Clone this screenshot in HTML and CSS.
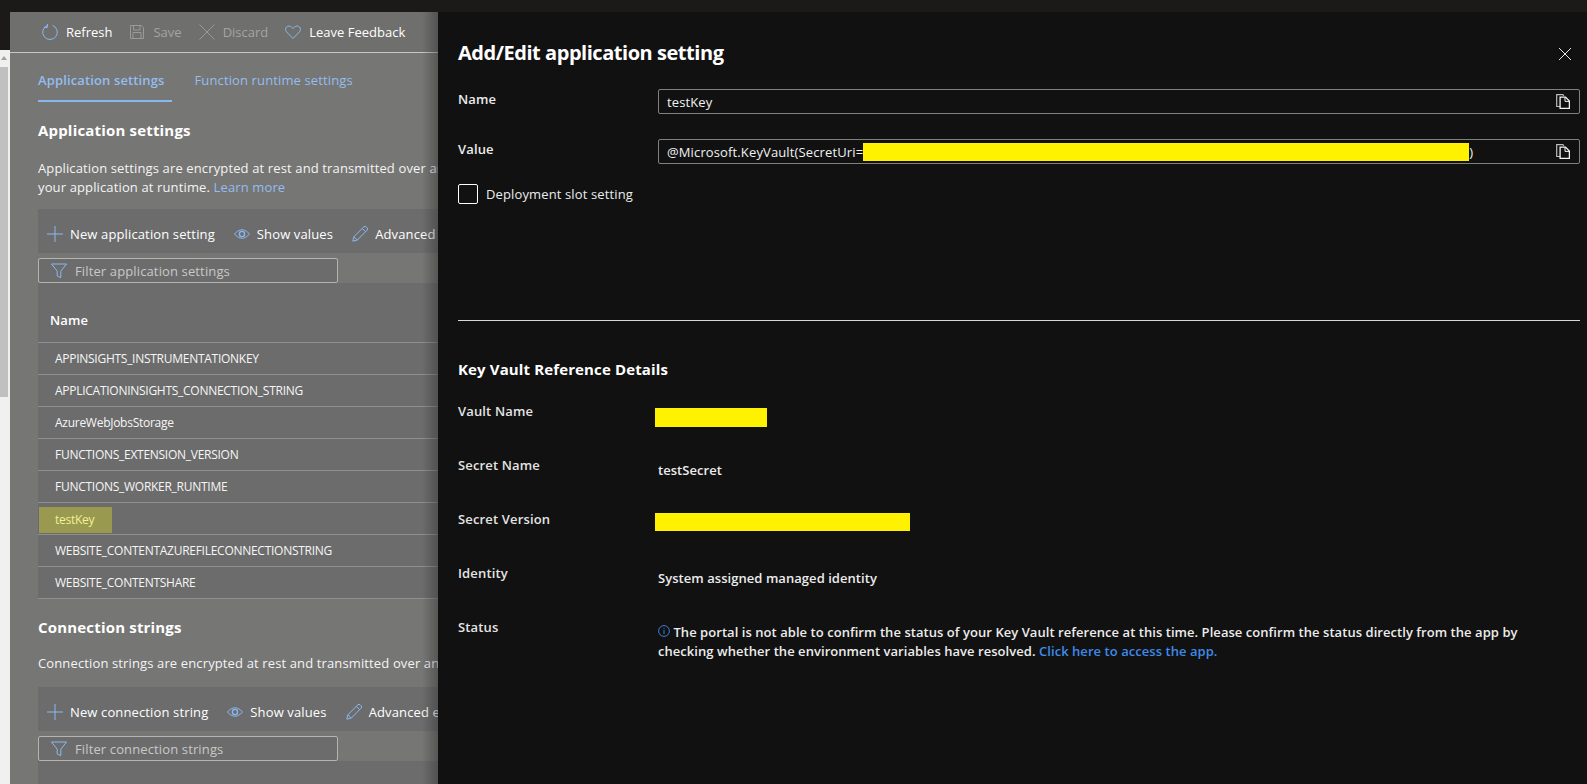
FILE: index.html
```html
<!DOCTYPE html>
<html lang="en">
<head>
<meta charset="utf-8">
<title>Add/Edit application setting</title>
<link rel="stylesheet" href="styles.css">
</head>
<body>
<svg class="defs" width="0" height="0" aria-hidden="true">
  <symbol id="i-plus" viewBox="0 0 16 16"><path d="M8 0v16M0 8h16" fill="none" stroke="currentColor"/></symbol>
  <symbol id="i-eye" viewBox="0 0 16 16"><path d="M.5 8C3 5 5.500 3.800 8 3.800S13 5 15.500 8C13 11 10.500 12.200 8 12.200S3 11 .5 8z" fill="none" stroke="currentColor"/><circle cx="8" cy="8" r="2.600" fill="none" stroke="currentColor" stroke-width="1.400"/></symbol>
  <symbol id="i-pencil" viewBox="0 0 16 16"><path d="M.8 15.200l1.100-4.500L11.800.9a1.700 1.700 0 0 1 2.400 0l.9.9a1.700 1.700 0 0 1 0 2.400L5.300 14.100zM1.900 10.700l3.400 3.400M10.300 2.400l3.300 3.300" fill="none" stroke="currentColor"/></symbol>
  <symbol id="i-filter" viewBox="0 0 16 16"><path d="M.5 1h15L9.800 8.200v6.500L6.200 13V8.200z" fill="none" stroke="currentColor"/></symbol>
  <symbol id="i-copy" viewBox="0 0 14 15"><path d="M4 12.500H.7V.7h6.200l1 1.200" fill="none" stroke="#bdbdbd" stroke-width="1.200"/><path d="M4.100 3.100h5.400l3.900 3.900v7.300H4.100z" fill="none" stroke="#f2f2f2" stroke-width="1.300"/><path d="M9 3.100v4.300h4.400" fill="none" stroke="#f2f2f2"/></symbol>
</svg>

<div class="topbar"></div>
<div class="stage">
  <div class="rail"><div class="rail-chrome"></div><div class="scroll"><div class="scroll-arrow"></div><div class="scroll-thumb"></div></div></div>

  <section class="blade">
    <div class="bar">
      <span class="bar-item"><svg class="ico i-blue" viewBox="0 0 16 16"><path d="M5.300 1.400A7.300 7.300 0 1 0 10.700 1.400M5.400 0v3.400H2" fill="none" stroke="currentColor" stroke-width="1"/></svg>Refresh</span>
      <span class="bar-item off"><svg class="ico" viewBox="0 0 16 16"><path d="M1.500 1.500h11l2 2v11h-13zM4.500 1.500v4.500h6.500v-4.500M4 14.500v-6h8v6" fill="none" stroke="currentColor"/></svg>Save</span>
      <span class="bar-item off"><svg class="ico" viewBox="0 0 16 16"><path d="M.5.500l15 15M15.500.500l-15 15" fill="none" stroke="currentColor"/></svg>Discard</span>
      <span class="bar-item"><svg class="ico i-blue" viewBox="0 0 16 16"><path d="M8 14.500L1.500 7.800C.2 6.300.2 4.300 1.500 3c1.400-1.300 3.500-1.300 4.900 0L8 4.500 9.600 3c1.400-1.300 3.500-1.300 4.900 0 1.300 1.300 1.300 3.300 0 4.800z" fill="none" stroke="currentColor"/></svg>Leave Feedback</span>
    </div>

    <div class="blade-body">
      <div class="tabs">
        <span class="tab active">Application settings</span>
        <span class="tab">Function runtime settings</span>
      </div>

      <h2 class="sec-title">Application settings</h2>
      <p class="sec-desc">Application settings are encrypted at rest and transmitted over an encrypted channel.<br>your application at runtime. <a class="lnk">Learn more</a></p>

      <div class="cmd">
        <span class="cmd-item"><svg class="ico i-blue"><use href="#i-plus"/></svg>New application setting</span>
        <span class="cmd-item"><svg class="ico i-blue"><use href="#i-eye"/></svg>Show values</span>
        <span class="cmd-item"><svg class="ico i-blue"><use href="#i-pencil"/></svg>Advanced edit</span>
      </div>
      <div class="filter"><svg class="ico i-blue"><use href="#i-filter"/></svg>Filter application settings</div>

      <div class="table">
        <div class="th">Name</div>
        <div class="tr"><span class="td">APPINSIGHTS_INSTRUMENTATIONKEY</span></div>
        <div class="tr"><span class="td">APPLICATIONINSIGHTS_CONNECTION_STRING</span></div>
        <div class="tr"><span class="td">AzureWebJobsStorage</span></div>
        <div class="tr"><span class="td">FUNCTIONS_EXTENSION_VERSION</span></div>
        <div class="tr"><span class="td">FUNCTIONS_WORKER_RUNTIME</span></div>
        <div class="tr"><span class="td td-hit">testKey</span></div>
        <div class="tr"><span class="td">WEBSITE_CONTENTAZUREFILECONNECTIONSTRING</span></div>
        <div class="tr"><span class="td">WEBSITE_CONTENTSHARE</span></div>
      </div>

      <h2 class="sec-title sec-two">Connection strings</h2>
      <p class="sec-desc one">Connection strings are encrypted at rest and transmitted over an encrypted channel.</p>

      <div class="cmd cmd-two">
        <span class="cmd-item"><svg class="ico i-blue"><use href="#i-plus"/></svg>New connection string</span>
        <span class="cmd-item"><svg class="ico i-blue"><use href="#i-eye"/></svg>Show values</span>
        <span class="cmd-item"><svg class="ico i-blue"><use href="#i-pencil"/></svg>Advanced edit</span>
      </div>
      <div class="filter"><svg class="ico i-blue"><use href="#i-filter"/></svg>Filter connection strings</div>
      <div class="table tail"></div>
    </div>
    <div class="blade-shade"></div>
  </section>

  <aside class="panel">
    <div class="panel-head">
      <h1 class="panel-title">Add/Edit application setting</h1>
      <svg class="close" viewBox="0 0 12 12"><path d="M0 0l12 12M12 0L0 12" fill="none" stroke="#e6e6e6"/></svg>
    </div>

    <div class="field">
      <label class="lbl">Name</label>
      <div class="input"><span class="input-text">testKey</span><svg class="copy"><use href="#i-copy"/></svg></div>
    </div>
    <div class="field">
      <label class="lbl">Value</label>
      <div class="input"><span class="input-text">@Microsoft.KeyVault(SecretUri=<span class="mask mask-uri"></span>)</span><svg class="copy"><use href="#i-copy"/></svg></div>
    </div>
    <div class="check"><span class="box"></span>Deployment slot setting</div>

    <hr class="rule">

    <h2 class="details-title">Key Vault Reference Details</h2>
    <div class="det"><span class="det-k">Vault Name</span><span class="det-v"><span class="mask mask-vault"></span></span></div>
    <div class="det"><span class="det-k">Secret Name</span><span class="det-v">testSecret</span></div>
    <div class="det"><span class="det-k">Secret Version</span><span class="det-v"><span class="mask mask-ver"></span></span></div>
    <div class="det"><span class="det-k">Identity</span><span class="det-v">System assigned managed identity</span></div>
    <div class="det"><span class="det-k">Status</span><span class="det-v status"><svg class="info" viewBox="0 0 12 12"><circle cx="6" cy="6" r="5.400" fill="none" stroke="#3b7fd6"/><path d="M6 5v4M6 3v1" stroke="#3b7fd6" fill="none"/></svg> The portal is not able to confirm the status of your Key Vault reference at this time. Please confirm the status directly from the app by<br>checking whether the environment variables have resolved. <a class="lnk-strong">Click here to access the app.</a></span></div>
  </aside>
</div>
</body>
</html>
```
FILE: styles.css
```css
* { box-sizing: border-box; }
html, body { margin: 0; height: 100%; }
body {
  width: 1587px; height: 784px; overflow: hidden;
  background: #1b1a18; color: #fff;
  font-family: "Open Sans", "Noto Sans", "Liberation Sans", sans-serif;
  font-size: 13px; letter-spacing: 0.13px;
  display: flex; flex-direction: column;
}
.defs { position: absolute; }
.topbar { height: 12px; flex: none; background: #1b1a18; }
.stage { flex: 1; display: flex; min-height: 0; }

.rail { width: 10px; flex: none; display: flex; flex-direction: column; }
.rail-chrome { height: 38px; background: #1b1a18; }
.scroll { flex: 1; background: #f0f0f0; padding-right: 2px; }
.scroll-arrow { width: 0; height: 0; margin: 6px 0 0 1px; border: 3px solid transparent; border-top: 0; border-bottom: 4px solid #a0a0a0; }
.scroll-thumb { height: 330px; margin-top: 7px; background: #c0c0c0; }

.blade { width: 428px; flex: none; position: relative; background: #767674; overflow: hidden; }
.blade-shade { position: absolute; top: 0; right: 0; bottom: 0; width: 16px; background: linear-gradient(to right, rgba(40,40,40,0), rgba(40,40,40,.4)); }
.bar { height: 41px; display: flex; align-items: center; padding-left: 32px; border-bottom: 1px solid #c8c8c6; background: #6f6f6e; letter-spacing: 0; }
.bar-item { display: flex; align-items: center; gap: 8px; margin-right: 17px; white-space: nowrap; color: #fff; }
.bar-item.off { color: #a4a4a2; }
.ico { width: 16px; height: 16px; flex: none; }
.i-blue { color: #8ab8ee; }
.off .ico { color: #9a9a98; }

.blade-body { padding-left: 28px; }
.tabs { height: 49px; display: flex; gap: 22px; padding-top: 18px; }
.tab { height: 31px; color: #94bdf0; white-space: nowrap; padding-right: 8px; }
.tab.active { font-weight: 600; letter-spacing: 0.13px; border-bottom: 2px solid #8ab8ee; }
.sec-title { margin: 17px 0 0; height: 22px; line-height: 22px; font-size: 15px; font-weight: 700; letter-spacing: 0.18px; white-space: nowrap; }
.sec-desc { margin: 18px 0 0; line-height: 19px; white-space: nowrap; color: #f4f4f4; height: 38px; }
.sec-desc.one { height: 19px; margin-top: 16px; }
.lnk { color: #94bdf0; }

.cmd { height: 44px; margin-top: 12px; padding: 6px 0 0 9px; background: #6c6c6c; display: flex; align-items: center; white-space: nowrap; }
.cmd-two { margin-top: 14px; }
.cmd-item { display: flex; align-items: center; gap: 7px; margin-right: 19px; }
.filter { width: 300px; height: 25px; margin-top: 5px; border: 1px solid #b4b4b2; border-radius: 2px; background: #6c6c6c; display: flex; align-items: center; gap: 8px; padding-left: 12px; color: #c9c9c7; white-space: nowrap; }

.table { background: #6c6c6c; }
.th { height: 60px; padding: 28px 0 0 12px; font-weight: 600; line-height: 18px; border-bottom: 1px solid #8b9096; }
.tr { height: 32px; display: flex; align-items: center; border-bottom: 1px solid #8f8f8d; font-size: 12px; letter-spacing: -0.27px; color: #f6f6f6; }
.td { padding-left: 17px; white-space: nowrap; }
.td-hit { width: 73px; height: 26px; margin: 3px 0 0 1px; padding-left: 16px; line-height: 25px; background: #999950; color: #f2ef95; }
.tail { height: 60px; }

.panel { flex: 1; min-width: 0; background: #111; padding: 0 7px 0 20px; color: #fff; }
.panel-head { height: 77px; display: flex; align-items: center; justify-content: space-between; padding: 7px 9px 0 0; }
.panel-title { margin: 0 0 4px; font-size: 20px; font-weight: 700; letter-spacing: -0.46px; }
.close { width: 12px; height: 12px; }
.field { display: flex; height: 50px; }
.lbl { width: 200px; flex: none; font-weight: 600; letter-spacing: 0.15px; color: #ececec; line-height: 20px; }
.input { flex: 1; height: 25px; border: 1px solid #808080; border-radius: 2px; display: flex; align-items: center; justify-content: space-between; padding: 0 9px 0 8px; color: #f2f2f2; }
.input-text { display: flex; align-items: center; white-space: nowrap; }
.copy { width: 14px; height: 15px; flex: none; }
.mask { display: block; background: #fff200; }
.mask-uri { width: 606px; height: 18px; }
.check { display: flex; align-items: center; gap: 8px; margin-top: -5px; height: 20px; color: #ececec; }
.box { width: 20px; height: 20px; border: 1px solid #fff; border-radius: 2px; }
.rule { height: 1px; border: 0; margin: 116px 0 0; background: #d8d8d8; }
.details-title { margin: 37px 0 7px; height: 22px; line-height: 22px; font-size: 15px; font-weight: 700; letter-spacing: 0.13px; }
.det { display: flex; height: 54px; }
.det-k { width: 200px; flex: none; font-weight: 600; letter-spacing: 0.15px; color: #e4e4e4; padding-top: 15px; line-height: 18px; }
.det-v { padding-top: 20px; line-height: 19px; font-weight: 600; letter-spacing: 0.05px; color: #ececec; }
.mask-vault { width: 112px; height: 19px; margin: 1px 0 0 -3px; }
.mask-ver { width: 255px; height: 18px; margin: -2px 0 0 -3px; }
.status { flex: 1; white-space: nowrap; }
.info { width: 12px; height: 12px; vertical-align: 0; }
.lnk-strong { color: #3f8ae8; }
```
